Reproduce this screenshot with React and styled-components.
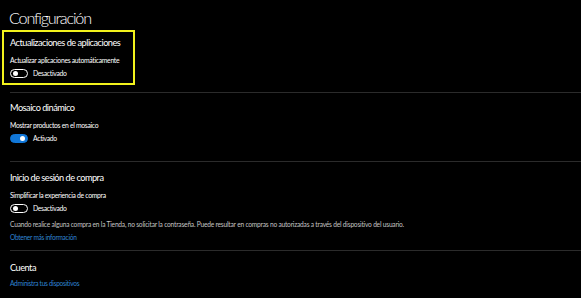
import styled, { createGlobalStyle } from 'styled-components'

const GlobalStyle = createGlobalStyle`
  html, body {
    margin: 0;
    padding: 0;
    background: #000;
  }
  body {
    font-family: Lato, 'Noto Sans', sans-serif;
    color: #fff;
  }
`

const Page = styled.div`
  width: 581px;
  height: 298px;
  overflow: hidden;
  background: #000;
  display: flex;
  flex-direction: column;
`

const Title = styled.h1`
  margin: 0;
  padding: 6px 0 0 9px;
  height: 24px;
  font-size: 16.2px;
  font-weight: 300;
  line-height: 24px;
  letter-spacing: -1.2px;
  color: #fff;
`

const Section = styled.section`
  margin-left: ${props => props.$highlight ? '2px' : '10px'};
  padding: ${props => props.$highlight ? '0 0 0 6px' : '0'};
  border: ${props => props.$highlight ? '2px solid #f2f21c' : 'none'};
  width: ${props => props.$highlight ? '133px' : 'auto'};
  height: ${props => props.$height}px;
  box-sizing: border-box;
  display: flex;
  flex-direction: column;
`

const Divider = styled.hr`
  margin: ${props => props.$top}px 0 0 10px;
  border: none;
  height: 1px;
  background: #2b2b2b;
`

const SectionTitle = styled.h2`
  margin: ${props => props.$top}px 0 0;
  font-size: 9.2px;
  font-weight: 400;
  line-height: 13px;
  letter-spacing: -0.5px;
  white-space: nowrap;
  color: #fff;
`

const Label = styled.div`
  margin-top: ${props => props.$top}px;
  font-size: 6.8px;
  line-height: 10px;
  letter-spacing: -0.3px;
  white-space: nowrap;
  color: #fff;
`

const ToggleRow = styled.div`
  margin-top: 3px;
  display: flex;
  align-items: center;
  gap: 5px;
  height: 10px;
`

const Track = styled.div`
  box-sizing: border-box;
  width: 18px;
  height: 9px;
  border-radius: 5px;
  border: 1px solid ${props => props.$on ? '#1177d8' : '#fff'};
  background: ${props => props.$on ? '#1177d8' : 'transparent'};
  display: flex;
  align-items: center;
  justify-content: ${props => props.$on ? 'flex-end' : 'flex-start'};
  padding: 0 2px;
`

const Knob = styled.div`
  width: 5px;
  height: 5px;
  border-radius: 50%;
  background: #fff;
`

const ToggleText = styled.span`
  font-size: 6.8px;
  line-height: 10px;
  letter-spacing: -0.3px;
  color: #fff;
`

const Description = styled.p`
  margin: 6px 0 0;
  font-size: 6.6px;
  line-height: 10px;
  letter-spacing: -0.2px;
  white-space: nowrap;
  color: #c4c4c4;
`

const Link = styled.a`
  margin-top: ${props => props.$top}px;
  font-size: 6.6px;
  line-height: 10px;
  letter-spacing: -0.3px;
  white-space: nowrap;
  color: #2f84d2;
  text-decoration: none;
`

const Toggle = ({ on }) => (
  <ToggleRow>
    <Track $on={on}><Knob /></Track>
    <ToggleText>{on ? 'Activado' : 'Desactivado'}</ToggleText>
  </ToggleRow>
)

export default function App() {
  return (
    <>
      <GlobalStyle />
      <Page>
        <Title>Configuración</Title>
        <Section $highlight $height={55}>
          <SectionTitle $top={4}>Actualizaciones de aplicaciones</SectionTitle>
          <Label $top={6}>Actualizar aplicaciones automáticamente</Label>
          <Toggle on={false} />
        </Section>
        <Divider $top={7} />
        <Section $height={68}>
          <SectionTitle $top={8}>Mosaico dinámico</SectionTitle>
          <Label $top={6}>Mostrar productos en el mosaico</Label>
          <Toggle on />
        </Section>
        <Divider $top={0} />
        <Section $height={88}>
          <SectionTitle $top={9}>Inicio de sesión de compra</SectionTitle>
          <Label $top={6}>Simplificar la experiencia de compra</Label>
          <Toggle on={false} />
          <Description>
            Cuando realice alguna compra en la Tienda, no solicitar la contraseña. Puede resultar en compras no autorizadas a través del dispositivo del usuario.
          </Description>
          <Link href="#" $top={3}>Obtener más información</Link>
        </Section>
        <Divider $top={0} />
        <Section $height={46}>
          <SectionTitle $top={10}>Cuenta</SectionTitle>
          <Link href="#" $top={4}>Administra tus dispositivos</Link>
        </Section>
      </Page>
    </>
  )
}
